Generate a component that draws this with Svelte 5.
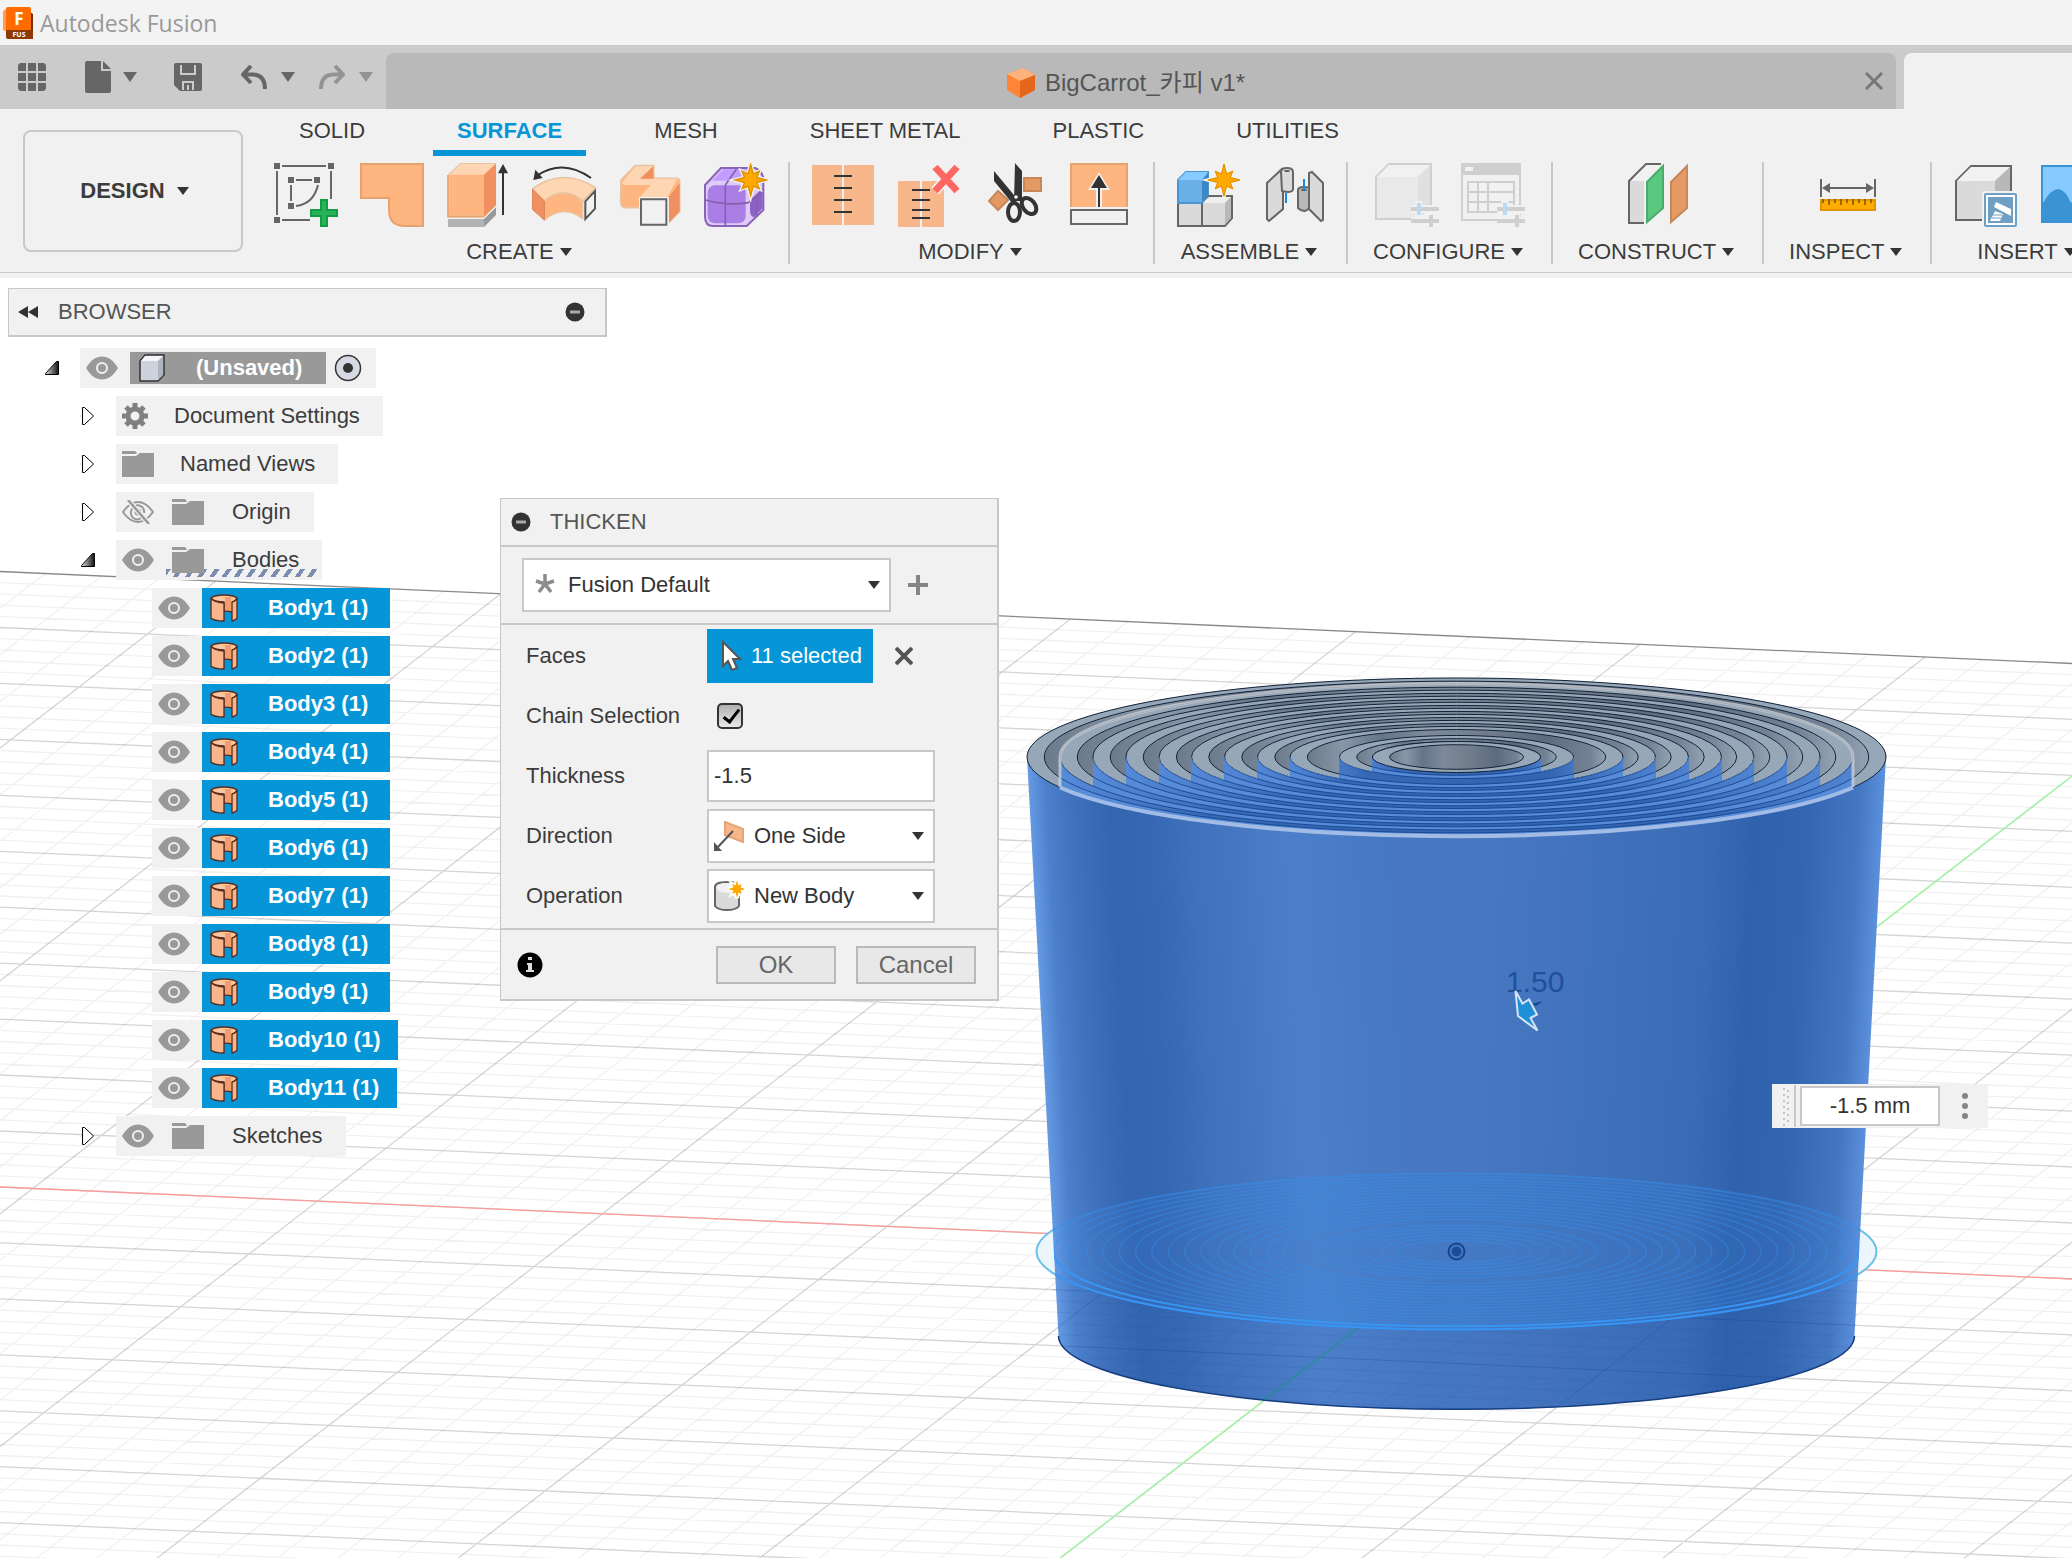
<script lang="ts">
  type TreeRow = {
    label: string
    level: number
    open?: boolean
    eye?: 'on' | 'off'
    icon: 'cube' | 'gear' | 'folder' | 'body'
    selected?: boolean
    hatched?: boolean
  }

  const tabs = ['SOLID', 'SURFACE', 'MESH', 'SHEET METAL', 'PLASTIC', 'UTILITIES']
  let activeTab = $state('SURFACE')

  const bodies: TreeRow[] = Array.from({ length: 11 }, (_, i) => ({
    label: `Body${i + 1} (1)`,
    level: 2,
    eye: 'on',
    icon: 'body',
    selected: true
  }))

  const rows: TreeRow[] = [
    { label: 'Document Settings', level: 1, open: false, icon: 'gear' },
    { label: 'Named Views', level: 1, open: false, icon: 'folder' },
    { label: 'Origin', level: 1, open: false, eye: 'off', icon: 'folder' },
    { label: 'Bodies', level: 1, open: true, eye: 'on', icon: 'folder', hatched: true },
    ...bodies,
    { label: 'Sketches', level: 1, open: false, eye: 'on', icon: 'folder' }
  ]

  let chain = $state(true)
  let thickness = $state('-1.5')
  let distance = $state('-1.5 mm')

  // ground grid: parallel projection, five minor cells per major cell
  const slope = 0.0444
  const farY = 571.5

  function gridPath(major: boolean) {
    let d = ''
    for (let j = 1; j < 90; j++) {
      if ((j % 5 === 0) !== major) continue
      const y = farY + j * 11.19
      d += `M0 ${y.toFixed(1)}L2072 ${(y + 2072 * slope).toFixed(1)}`
    }
    for (let i = -39; i < 20; i++) {
      if ((i % 5 === 0) !== major) continue
      const x = 2210 + i * 56.97
      const y = farY + x * slope
      d += `M${x.toFixed(1)} ${y.toFixed(1)}l-1370 1059`
    }
    return d
  }

  const minorGrid = gridPath(false)
  const majorGrid = gridPath(true)

  // concentric shells, outermost first
  const cx = 1456.5
  const topY = 757
  const tilt = 0.184
  const shells = [429.5, 396.5, 363.5, 330.5, 297.5, 265, 232, 199, 166.5, 117, 84]
  const wall = 17.3

  const sketchRadii = Array.from({ length: 22 }, (_, i) => 403 - i * 16.4).filter((_, i) => i !== 15)

  function front(r: number) {
    return `M${cx - r} ${topY}A${r} ${r * tilt} 0 0 0 ${cx + r} ${topY}V860H${cx - r}Z`
  }

  function star(x: number, y: number, r: number) {
    const pts = []
    for (let i = 0; i < 16; i++) {
      const len = i % 2 ? r * 0.42 : i % 4 ? r * 0.78 : r
      const a = (i * Math.PI) / 8
      pts.push(`${(x + len * Math.sin(a)).toFixed(1)},${(y - len * Math.cos(a)).toFixed(1)}`)
    }
    return pts.join(' ')
  }
</script>

{#snippet down()}
  <svg class="down" viewBox="0 0 12 8" aria-hidden="true"><path d="M0 0H12L6 8Z" fill="currentColor" /></svg>
{/snippet}

{#snippet minus()}
  <svg class="minus" viewBox="0 0 20 20" aria-hidden="true">
    <circle cx="10" cy="10" r="9.500" fill="#333" /><path d="M5 10H15" stroke="#aaa" stroke-width="3" />
  </svg>
{/snippet}

{#snippet eye(off: boolean)}
  <svg class="eye" viewBox="0 0 32 24" aria-hidden="true">
    {#if off}
      <g fill="none" stroke="#999" stroke-width="2">
        <path d="M1 12Q8 2 16 2T31 12Q24 22 16 22T1 12Z" />
        <path d="M11 8A6.500 6.500 0 1 0 21 16M14 5.500A6.500 6.500 0 0 1 22 13" />
        <circle cx="16" cy="12" r="2.500" />
      </g>
      <path d="M6 0L27 24" stroke="#f1f1f1" stroke-width="5" /><path d="M6 0L27 24" stroke="#999" stroke-width="2.500" />
    {:else}
      <path d="M0 12C5 4 10 0.500 16 0.500S27 4 32 12C27 20 22 23.500 16 23.500S5 20 0 12Z" fill="#999" />
      <circle cx="16" cy="12" r="5" fill="none" stroke="#f1f1f1" stroke-width="2" />
    {/if}
  </svg>
{/snippet}

{#snippet caret(open: boolean)}
  <svg class="caret" viewBox="0 0 16 20" aria-hidden="true">
    {#if open}
      <path d="M14.500 3.500V16.500H1.500V15.500L12.500 3.500Z" fill="url(#caretFill)" stroke="#000" />
    {:else}
      <path d="M2.500 1.500H4.500L13.500 10L4.500 18.500H2.500Z" fill="#fff" stroke="#000" />
    {/if}
  </svg>
{/snippet}

{#snippet sliders()}
  <path d="M36 46H64M36 58H64" stroke="#f1f1f1" stroke-width="8" />
  <path d="M44 38V54M56 50V64" stroke="#f1f1f1" stroke-width="7" />
  <path d="M36 46H64M36 58H64M56 52V64" stroke="#cfcfcf" stroke-width="4" />
  <path d="M44 40V52" stroke="#b9daf2" stroke-width="4" />
{/snippet}

<div class="app">
  <header class="titlebar">
    <svg class="logo" viewBox="0 0 30 32" aria-hidden="true">
      <path d="M0 4L5 1V25L0 23Z" fill="#ff9a56" />
      <path d="M27 5L30 7V32L27 31Z" fill="#7a3000" />
      <rect x="3" y="0" width="25" height="25" rx="2" fill="#ff6b00" />
      <path d="M3 23H30V32H5Q3 32 3 30Z" fill="#8f3a00" />
      <text x="16" y="18" class="logo-f">F</text>
      <text x="16" y="30" class="logo-fus">FUS</text>
    </svg>
    <span>Autodesk Fusion</span>
  </header>

  <div class="tabbar">
    <div class="quick">
      <button aria-label="Data panel">
        <svg width="28" height="28" viewBox="0 0 28 28">
          <path d="M2 0H8V8H0V2ZM10 0H18V8H10ZM20 0H26L28 2V8H20ZM0 10H8V18H0ZM10 10H18V18H10ZM20 10H28V18H20ZM0 20H8V28H2L0 26ZM10 20H18V28H10ZM20 20H28V26L26 28H20Z" fill="currentColor" />
        </svg>
      </button>
      <button class="file" aria-label="File">
        <svg width="26" height="32" viewBox="0 0 26 32"><path d="M2 0H16V10H26V30Q26 32 24 32H2Q0 32 0 30V2Q0 0 2 0ZM18 0L26 8H18Z" fill="currentColor" /></svg>
        <svg class="drop" viewBox="0 0 14 10"><path d="M0 0H14L7 10Z" fill="currentColor" /></svg>
      </button>
      <button class="save" aria-label="Save">
        <svg width="28" height="28" viewBox="0 0 28 28">
          <path d="M2 0H26Q28 0 28 2V26Q28 28 26 28H6L0 22V2Q0 0 2 0Z" fill="currentColor" />
          <path d="M7 2V11H21V2M9 27V19H19V27" fill="none" stroke="#cbcbcb" stroke-width="2" />
          <path d="M14 22V27" stroke="#cbcbcb" stroke-width="2" />
        </svg>
      </button>
      <button class="undo" aria-label="Undo">
        <svg width="26" height="24" viewBox="0 0 26 24"><path d="M10 1L2 9.500L10 18M2 9.500H12Q24 10 24 24" fill="none" stroke="currentColor" stroke-width="4" /></svg>
        <svg class="drop" viewBox="0 0 14 10"><path d="M0 0H14L7 10Z" fill="currentColor" /></svg>
      </button>
      <button class="redo" aria-label="Redo" disabled>
        <svg width="26" height="24" viewBox="0 0 26 24"><path d="M16 1L24 9.500L16 18M24 9.500H14Q2 10 2 24" fill="none" stroke="currentColor" stroke-width="4" /></svg>
        <svg class="drop" viewBox="0 0 14 10"><path d="M0 0H14L7 10Z" fill="currentColor" /></svg>
      </button>
    </div>
    <div class="doc">
      <div class="doc-name">
        <svg width="30" height="32" viewBox="0 0 30 32" aria-hidden="true">
          <path d="M1 7L17 1L29 8V23L14 31L1 23Z" fill="#ff8534" />
          <path d="M1 7L17 1L29 8L14 14Z" fill="#ffb27d" /><path d="M14 14L29 8V23L14 31Z" fill="#e5661a" />
        </svg>
        <span>BigCarrot_카피 v1*</span>
      </div>
      <button class="close" aria-label="Close">
        <svg width="18" height="18" viewBox="0 0 18 18"><path d="M1 1L17 17M17 1L1 17" stroke="#777" stroke-width="3" /></svg>
      </button>
    </div>
    <div class="next-tab"></div>
  </div>

  <section class="ribbon">
    <button class="workspace">DESIGN {@render down()}</button>
    <div class="ribbon-main">
      <nav class="tabs">
        {#each tabs as tab (tab)}
          <button class:active={tab === activeTab} onclick={() => (activeTab = tab)}>{tab}</button>
        {/each}
      </nav>
      <div class="groups">
        <div class="group">
          <div class="icons">
            <svg viewBox="42 189 192 192">
              <path d="M66 198H198M51 213V345M213 213V297M66 360H150M108 240H156M93 255V303M174 255Q160 312 108 318" fill="none" stroke="#666" stroke-width="6" />
              <path d="M42 189H60V207H42ZM204 189H222V207H204ZM42 351H60V369H42ZM84 231H102V249H84ZM162 231H180V249H162ZM84 309H102V327H84Z" fill="#666" />
              <path d="M183 300H201V330H231V348H201V378H183V348H153V330H183Z" fill="#27b35a" stroke="#149b45" stroke-width="6" />
            </svg>
            <svg viewBox="300 189 192 192"><path d="M303 192H489V378H435Q387 378 387 330V294H303Z" fill="#ffb580" stroke="#e8a26e" stroke-width="6" /></svg>
            <svg viewBox="558 189 192 192">
              <path d="M564 357H672V381H564Z" fill="#b3b3b3" /><path d="M672 357L708 322V345L672 381Z" fill="#999" />
              <path d="M567 224L602 191H706V314L671 349H567Z" fill="#ffb580" stroke="#e8c3a0" stroke-width="5" />
              <path d="M567 224L602 192H706L671 224Z" fill="#ffd6b3" /><path d="M672 225L708 191V316L672 350Z" fill="#f09060" />
              <path d="M564 225V350H672" fill="none" stroke="#e8a26e" stroke-width="5" />
              <path d="M729 345V205" stroke="#333" stroke-width="6" /><path d="M729 192L744 220H714Z" fill="#333" />
            </svg>
            <svg viewBox="816 189 192 192">
              <path d="M817 266Q912 200 1007 264L968 303Q912 255 853 303Z" fill="#ffd6b3" stroke="#e8c3a0" stroke-width="5" />
              <path d="M853 303Q912 255 968 303V356Q912 312 853 360Z" fill="#ffb580" stroke="#e8c3a0" stroke-width="4" />
              <path d="M817 268L853 303V360L817 328Z" fill="#f09060" stroke="#d98050" stroke-width="3" />
              <path d="M976 304L1005 273V326L976 357Z" fill="#f1f1f1" stroke="#555" stroke-width="6" />
              <path d="M993 234Q910 175 832 226" fill="none" stroke="#333" stroke-width="6" /><path d="M820 240L826 209L848 234Z" fill="#333" />
            </svg>
            <svg viewBox="1074 189 192 192">
              <path d="M1083 240L1125 197H1181V235H1249Q1259 235 1259 245V335L1226 368H1140V323H1100Q1082 323 1082 305Z" fill="#ffb580" stroke="#e8c3a0" stroke-width="5" />
              <path d="M1085 250L1126 199H1180L1140 236H1252L1222 292H1140L1172 255H1095Z" fill="#ffd6b3" />
              <path d="M1180 199V236H1140ZM1226 290L1259 250V333L1226 368Z" fill="#f09060" />
              <path d="M1137 291H1227V379H1137Z" fill="#f1f1f1" /><path d="M1143 298H1219V374H1143Z" fill="#f1f1f1" stroke="#666" stroke-width="6" />
            </svg>
            <svg viewBox="1332 189 192 192">
              <path d="M1335 255L1383 204H1485Q1510 215 1510 240V330L1460 378H1360Q1335 378 1335 350Z" fill="#decbf8" stroke="#8a62b8" stroke-width="6" />
              <path d="M1356 242L1390 208H1470L1440 242Z" fill="#c39cff" /><rect x="1343" y="256" width="114" height="114" rx="22" fill="#ab7ee6" />
              <path d="M1470 300L1508 264V325L1482 352Q1470 350 1470 330Z" fill="#8a62c8" />
              <path d="M1396 378V255L1430 206M1337 300Q1400 318 1465 308L1508 275M1490 290V350" fill="none" stroke="#8460ae" stroke-width="5" />
              <polygon points={star(1472, 240, 50)} fill="#ffa800" stroke="#f1f1f1" stroke-width="10" paint-order="stroke" /><polygon points={star(1472, 240, 47)} fill="#ffa800" stroke="#e09000" stroke-width="4" />
            </svg>
          </div>
          <button class="menu">CREATE {@render down()}</button>
        </div>

        <div class="group">
          <div class="icons">
            <svg viewBox="0 0 64 64">
              <path d="M1 2H31V62H1ZM33 2H63V62H33Z" fill="#f7b78b" /><path d="M23 13H41M23 25H41M23 37H41M23 49H41" stroke="#333" stroke-width="2" />
            </svg>
            <svg viewBox="0 0 64 64">
              <path d="M1 18H23V64H1ZM25 18H47V64H25Z" fill="#f7b78b" /><path d="M15 27H33M15 37H33M15 47H33M15 55H33" stroke="#333" stroke-width="2" />
              <path d="M38 4L60 28M60 4L38 28" stroke="#f1f1f1" stroke-width="10" /><path d="M38 4L60 28M60 4L38 28" stroke="#ff6663" stroke-width="7" />
            </svg>
            <svg viewBox="0 0 64 64">
              <path d="M41 15H58V28H41ZM6 38L15 28L25 37L15 47Z" fill="#e59a66" stroke="#c98657" stroke-width="2" />
              <path d="M32 0L39 8V38H31ZM11 8L31 32L33 40H29L11 18Z" fill="#333" />
              <ellipse cx="31" cy="49" rx="6" ry="9" fill="none" stroke="#333" stroke-width="4" />
              <ellipse cx="46" cy="43" rx="6" ry="9" transform="rotate(-38 46 43)" fill="none" stroke="#333" stroke-width="4" />
              <circle cx="33" cy="34" r="1.800" fill="#fff" />
            </svg>
            <svg viewBox="0 0 64 64">
              <path d="M2 44V1H58V44" fill="#ffb580" stroke="#e8a26e" stroke-width="2" />
              <path d="M30 9L41 27H33V44H27V27H19Z" fill="#f1f1f1" /><path d="M30 12L38 25H31V44H29V25H22Z" fill="#333" />
              <path d="M2 47H58V61H2Z" fill="none" stroke="#666" stroke-width="2" />
            </svg>
          </div>
          <button class="menu">MODIFY {@render down()}</button>
        </div>

        <div class="group">
          <div class="icons">
            <svg viewBox="0 0 64 64">
              <path d="M2 40H26V63H2ZM26 40L33 33H56V55L49 63H26Z" fill="#dadada" stroke="#666" stroke-width="2" /><path d="M26 40L33 34H55L49 40Z" fill="#eee" /><path d="M49 40L55 34V55L49 62Z" fill="#b8b8b8" />
              <path d="M2 17L10 9H32V32L26 40H2Z" fill="#69b0e6" stroke="#4a94cf" stroke-width="2" /><path d="M2 17L10 9H32L26 17Z" fill="#86caff" /><path d="M26 17L32 10V32L26 39Z" fill="#3d88c4" />
              <polygon points={star(48, 17, 17)} fill="#ffa800" stroke="#f1f1f1" stroke-width="3" paint-order="stroke" /><polygon points={star(48, 17, 16)} fill="#ffa800" stroke="#e09000" />
            </svg>
            <svg viewBox="0 0 64 64">
              <g fill="#dadada" stroke="#666" stroke-width="2">
                <path d="M5 20L20 6L21 8V46L7 58L5 56Z" /><path d="M19 9Q19 5 25 5T31 9V26Q31 29 25 29L20 28Z" /><path d="M47 10L50 9L61 20V57L59 58L47 46Z" />
                <path d="M36 27Q36 24 42 24T47 27V45Q45 48 42 48T36 45Z" fill="#b8b8b8" />
              </g>
              <ellipse cx="25" cy="8" rx="3" ry="1" fill="#555" /><ellipse cx="42" cy="27" rx="3" ry="1" fill="#555" />
              <path d="M24 30V40M42 16V27" stroke="#148ae0" stroke-width="2" />
            </svg>
          </div>
          <button class="menu">ASSEMBLE {@render down()}</button>
        </div>

        <div class="group">
          <div class="icons">
            <svg viewBox="0 0 64 64">
              <path d="M1 14L14 1H56V41L43 56H1Z" fill="#e9e9e9" stroke="#cfcfcf" stroke-width="2" /><path d="M2 14L14 2H55L43 14Z" fill="#f1f1f1" /><path d="M43 14L55 2V41L43 55Z" fill="#e0e0e0" />
              {@render sliders()}
            </svg>
            <svg viewBox="0 0 64 64">
              <path d="M1 1H59V57H1Z" fill="none" stroke="#cfcfcf" stroke-width="2" /><path d="M0 0H60V12H0Z" fill="#cfcfcf" /><path d="M4 4H12V8H4Z" fill="#f1f1f1" />
              <path d="M7 19H53V49H7ZM7 29H53M7 39H53M17 19V49M27 19V49" fill="none" stroke="#cfcfcf" stroke-width="2" />
              {@render sliders()}
            </svg>
          </div>
          <button class="menu">CONFIGURE {@render down()}</button>
        </div>

        <div class="group">
          <div class="icons">
            <svg viewBox="0 0 64 64">
              <path d="M3 18H18V60H3Z" fill="#dadada" /><path d="M18 60H3V18L20 1H35" fill="none" stroke="#666" stroke-width="2" />
              <path d="M21 19L37 3V45L21 59Z" fill="#5ac97f" stroke="#48ac6a" stroke-width="2" /><path d="M45 19L61 3V45L45 59Z" fill="#e59a66" stroke="#c98657" stroke-width="2" />
            </svg>
          </div>
          <button class="menu">CONSTRUCT {@render down()}</button>
        </div>

        <div class="group">
          <div class="icons">
            <svg viewBox="0 0 64 64">
              <path d="M5 16V34M59 16V34M8 25H56" stroke="#666" stroke-width="2" /><path d="M6 25L14 20V30ZM58 25L50 20V30Z" fill="#666" />
              <path d="M5 37H59V47H5Z" fill="#ffab00" stroke="#e09600" stroke-width="2" /><path d="M7 36V40M13 36V42M19 36V40M25 36V42M31 36V40M37 36V42M43 36V40M49 36V42M55 36V40" stroke="#7a5500" stroke-width="1.500" />
            </svg>
          </div>
          <button class="menu">INSPECT {@render down()}</button>
        </div>

        <div class="group">
          <div class="icons">
            <svg viewBox="0 0 64 64">
              <path d="M3 18L18 3H58V42L42 57H3Z" fill="#dadada" stroke="#666" stroke-width="2" /><path d="M4 18L18 4H57L42 18Z" fill="#f1f1f1" /><path d="M42 18L57 4V42L42 56Z" fill="#b8b8b8" />
              <rect x="29" y="28" width="35" height="36" rx="3" fill="#f1f1f1" /><rect x="31" y="30" width="33" height="34" rx="2" fill="#6f9fc2" /><path d="M34 33H61V61H34Z" fill="none" stroke="#fff" stroke-width="2" />
              <path d="M43 39L58 46V53L41 44ZM42 48L50 51L47 58H37Z" fill="#fff" /><path d="M40 52H49M39 55H48" stroke="#6f9fc2" />
            </svg>
            <svg viewBox="0 0 64 64">
              <path d="M3 3H63V59H3Z" fill="#86caff" stroke="#3c93d4" stroke-width="2" /><path d="M4 40Q12 26 19 26T32 40L44 30L62 44V58H4Z" fill="#3c93d4" />
            </svg>
          </div>
          <button class="menu">INSERT {@render down()}</button>
        </div>
      </div>
    </div>
  </section>

  <main class="viewport">
    <svg class="scene" viewBox="0 278 2072 1280" preserveAspectRatio="xMinYMin slice" role="img" aria-label="Model">
      <defs>
        <linearGradient id="caretFill"><stop offset="0" stop-color="#ddd" /><stop offset="1" stop-color="#111" /></linearGradient>
        <linearGradient id="left" gradientUnits="userSpaceOnUse" x1="1027" x2="1457" y1="0" y2="0">
          <stop offset="0" stop-color="#659ae3" /><stop offset=".04" stop-color="#4c80cc" /><stop offset=".1" stop-color="#4071bb" />
          <stop offset=".19" stop-color="#3365b0" /><stop offset=".27" stop-color="#3567b2" /><stop offset=".38" stop-color="#4071bb" />
          <stop offset=".6" stop-color="#4c7fca" /><stop offset=".88" stop-color="#4677c0" />
        </linearGradient>
        <linearGradient id="right" gradientUnits="userSpaceOnUse" x1="1457" x2="1887" y1="0" y2="0">
          <stop offset=".1" stop-color="#4677c0" /><stop offset=".45" stop-color="#3e6fb9" /><stop offset=".6" stop-color="#3a6bb5" />
          <stop offset=".7" stop-color="#2f62ad" /><stop offset=".82" stop-color="#3365b0" /><stop offset=".94" stop-color="#4477c2" /><stop offset="1" stop-color="#5c91dd" />
        </linearGradient>
        <linearGradient id="gap">
          <stop offset="0" stop-color="#6c7b8c" /><stop offset=".12" stop-color="#8797a8" /><stop offset=".25" stop-color="#657589" />
          <stop offset=".4" stop-color="#7e8a99" /><stop offset=".6" stop-color="#727d8c" /><stop offset=".8" stop-color="#5c6b7d" /><stop offset=".95" stop-color="#738294" /><stop offset="1" stop-color="#93a3b4" />
        </linearGradient>
        <linearGradient id="gapBlue"><stop offset="0" stop-color="#5a8fdf" /><stop offset=".2" stop-color="#3567b3" /><stop offset=".8" stop-color="#3264b0" /><stop offset="1" stop-color="#5488d6" /></linearGradient>
        <clipPath id="bodyClip"><path d="M1027 757L1058.500 1336A398 73.300 0 0 0 1854.500 1336L1886 757A429.500 79 0 0 0 1027 757Z" /></clipPath>
        <clipPath id="baseClip"><path d="M1050 1270A420 78 0 0 0 1863 1270L1854.500 1336A398 73.300 0 0 1 1058.500 1336Z" /></clipPath>
        <clipPath id="cutClip">
          {#each shells.slice(1) as r (r)}<path d={front(r)} />{/each}
        </clipPath>
      </defs>

      <g fill="none">
        <path d={minorGrid} stroke="#000" stroke-opacity=".06" stroke-width="1.300" />
        <path d={majorGrid} stroke="#000" stroke-opacity=".17" stroke-width="1.300" />
        <path d="M0 571.500L2072 663.500" stroke="#888" stroke-width="1.300" />
        <path d="M0 1187L2072 1279" stroke="#ff9a9a" stroke-width="1.300" />
        <path d="M2072 776L1060 1558" stroke="#9df79d" stroke-width="1.300" />
      </g>

      <ellipse {cx} cy="1251.500" rx="420" ry="78" fill="#eaf6fb" stroke="#69c0e8" stroke-width="2" />

      <g clip-path="url(#bodyClip)">
        <rect x="1020" y="670" width="500" height="760" fill="url(#left)" transform="matrix(1 0 .0548 1 -41.500 0)" />
        <rect x="1457" y="670" width="470" height="760" fill="url(#right)" transform="matrix(1 0 -.0548 1 41.500 0)" />
      </g>
      <path d="M1058.500 1336A398 73.300 0 0 0 1854.500 1336" fill="none" stroke="#173f80" stroke-width="1.500" />

      <g clip-path="url(#baseClip)" fill="none" opacity=".3">
        <path d={minorGrid} stroke="#123a78" stroke-opacity=".3" />
        <path d={majorGrid} stroke="#123a78" stroke-opacity=".8" />
        <path d="M2072 776L1060 1558" stroke="#00a050" stroke-width="2" />
      </g>

      <g clip-path="url(#bodyClip)" fill="none" stroke="#3590ee">
        <ellipse {cx} cy="1251.500" rx="420" ry="78" fill="#3d92ee" fill-opacity=".1" stroke-opacity=".5" stroke-width="2" />
        {#each sketchRadii as r (r)}
          <ellipse {cx} cy="1251.500" rx={r} ry={r * 0.1855} stroke-opacity=".42" stroke-width="1.500" />
        {/each}
        <path d="M1036.500 1251.500A420 78 0 0 0 1876.500 1251.500M1053.500 1251.500A403 74.800 0 0 0 1859.500 1251.500" stroke="#3795f4" stroke-width="2" />
      </g>
      <circle {cx} cy="1251.500" r="8" fill="none" stroke="#174488" stroke-width="2" /><circle {cx} cy="1251.500" r="5" fill="#1b4d99" />

      {#each shells as r (r)}
        <ellipse {cx} cy={topY} rx={r} ry={r * tilt} fill="#96a7b8" stroke="#152338" />
        <ellipse {cx} cy={topY} rx={r - wall} ry={(r - wall) * tilt} fill="url(#gap)" stroke="#152338" />
      {/each}
      <g clip-path="url(#cutClip)">
        {#each shells as r (r)}
          <ellipse {cx} cy={topY} rx={r} ry={r * tilt} fill="#568bd8" stroke="#0d3a85" stroke-opacity=".75" />
          {#if r > 84}
            <ellipse {cx} cy={topY} rx={r - wall} ry={(r - wall) * tilt} fill="url(#gapBlue)" stroke="#0d3a85" stroke-opacity=".75" />
          {/if}
        {/each}
      </g>
      <ellipse {cx} cy={topY} rx="84" ry="15.500" fill="#96a7b8" stroke="#152338" />
      <ellipse {cx} cy={topY} rx="67" ry="12.300" fill="url(#gap)" stroke="#152338" />

      <path d="M1060 787V757A396.500 73.500 0 0 1 1853 757V787" fill="none" stroke="#c9ced4" stroke-width="3" stroke-opacity=".8" />
      <path d="M1060 787.500A429.500 79 0 0 0 1853 787.500" fill="none" stroke="#a3bce6" stroke-width="4" />

      <text x="1506" y="992" class="dim">1.50</text>
      <path d="M1532 1004L1543 1001L1536 1006Z" fill="#174488" />
      <path d="M1515.500 991L1522.500 1003.500L1529 999.500L1537 1014.500L1530.500 1018L1537.500 1030.500L1518 1016Z" fill="#1f8fd6" stroke="#d5e3f5" stroke-width="2" />
    </svg>

    <aside class="browser">
      <div class="browser-head">
        <svg width="20" height="12" viewBox="0 0 20 12" aria-hidden="true"><path d="M10 0V12L0 6ZM20 0V12L10 6Z" fill="#333" /></svg>
        <span>BROWSER</span>
        {@render minus()}
      </div>
      <div class="tree">
        <div class="row root">
          {@render caret(true)}
          <div class="chip">
            {@render eye(false)}
            <div class="doc-node">
              <svg width="28" height="28" viewBox="0 0 28 28" aria-hidden="true">
                <path d="M2 7L7 1H26V21L20 27H2Z" fill="#cdd2dd" stroke="#333" stroke-width="1.500" /><path d="M3 7L7 2H25L20 7Z" fill="#f5f6fa" /><path d="M20 7L25 2V21L20 26Z" fill="#aeb5c2" />
              </svg>
              <span>(Unsaved)</span>
            </div>
            <svg width="28" height="28" viewBox="0 0 28 28" aria-hidden="true"><circle cx="14" cy="14" r="12.500" fill="#d5dae4" stroke="#333" stroke-width="1.500" /><circle cx="14" cy="14" r="5" fill="#333" /></svg>
          </div>
        </div>
        {#each rows as row (row.label)}
          <div class="row" class:nested={row.level === 2}>
            {#if row.level === 1}{@render caret(row.open ?? false)}{/if}
            <div class="chip" class:plain={!row.eye} class:selected={row.selected}>
              {#if row.eye}{@render eye(row.eye === 'off')}{/if}
              <div class="node" class:hatched={row.hatched}>
                {#if row.icon === 'gear'}
                  <svg width="26" height="26" viewBox="0 0 26 26" aria-hidden="true">
                    <path d="M13 0V26M0 13H26M4 4L22 22M22 4L4 22" stroke="#808080" stroke-width="5" /><circle cx="13" cy="13" r="7" fill="#f1f1f1" stroke="#808080" stroke-width="5" />
                  </svg>
                {:else if row.icon === 'folder'}
                  <svg width="32" height="26" viewBox="0 0 32 26" aria-hidden="true"><path d="M0 0H13L15 2L14 3H0ZM0 5H14L18 2H32V26H0Z" fill="#999" /></svg>
                {:else}
                  <svg width="28" height="28" viewBox="0 0 28 28" aria-hidden="true">
                    <g stroke="#5a2a18" stroke-width="1.300" stroke-linejoin="round">
                      <path d="M14 8V17Q18 17 23 18L27 4Q23 1 14 1T1 4Q4 8 14 8Z" fill="#fbc6a0" />
                      <path d="M1 4Q3 8 14 9V27Q4 27 1 24Z" fill="#f8b48a" />
                      <path d="M27 4V24Q26 26 22 27V8Q26 7 27 4Z" fill="#f8b48a" />
                    </g>
                    <path d="M15 3H21V16H15Z" fill="#f29e6c" />
                  </svg>
                {/if}
                <span>{row.label}</span>
              </div>
            </div>
          </div>
        {/each}
      </div>
    </aside>

    <form class="dialog" onsubmit={(e) => e.preventDefault()}>
      <div class="dialog-head">{@render minus()}<span>THICKEN</span></div>
      <div class="preset">
        <div class="select wide">
          <svg width="20" height="20" viewBox="0 0 20 20" aria-hidden="true"><path d="M10 10V0M10 10L1 7M10 10L19 7M10 10L4 18M10 10L16 18" stroke="#8c8c8c" stroke-width="3.500" /></svg>
          <select aria-label="Preset"><option>Fusion Default</option></select>
          {@render down()}
        </div>
        <button type="button" class="bare" aria-label="Add preset"><svg width="20" height="20" viewBox="0 0 20 20"><path d="M10 0V20M0 10H20" stroke="#858585" stroke-width="4" /></svg></button>
      </div>
      <div class="fields">
        <div class="field">
          <span class="name">Faces</span>
          <button type="button" class="picker">
            <svg width="20" height="32" viewBox="0 0 20 32" aria-hidden="true"><path d="M1 2V26L6 21L10 30L15 28L11 19H18Z" fill="#fff" stroke="#555" stroke-width="2" /></svg>
            11 selected
          </button>
          <button type="button" class="bare" aria-label="Clear faces"><svg width="18" height="18" viewBox="0 0 18 18"><path d="M1 1L17 17M17 1L1 17" stroke="#555" stroke-width="4" /></svg></button>
        </div>
        <div class="field">
          <label class="name" for="chain">Chain Selection</label>
          <input id="chain" type="checkbox" bind:checked={chain} />
        </div>
        <div class="field">
          <label class="name" for="thickness">Thickness</label>
          <input id="thickness" type="text" bind:value={thickness} />
        </div>
        <div class="field">
          <label class="name" for="direction">Direction</label>
          <div class="select">
            <svg width="30" height="30" viewBox="0 0 30 30" aria-hidden="true"><path d="M11 1L29 8V21L11 14Z" fill="#f7b78b" stroke="#e5a577" stroke-width="2" /><path d="M19 10L3 27" stroke="#555" stroke-width="2" /><path d="M0 21V30H8Z" fill="#555" /></svg>
            <select id="direction"><option>One Side</option></select>
            {@render down()}
          </div>
        </div>
        <div class="field">
          <label class="name" for="operation">Operation</label>
          <div class="select">
            <svg width="30" height="30" viewBox="0 0 30 30" aria-hidden="true">
              <path d="M1 6Q1 1 13 1T25 6V25Q22 29 13 29T1 25Z" fill="#dadada" stroke="#666" stroke-width="2" /><ellipse cx="13" cy="7" rx="11" ry="5" fill="#f1f1f1" />
              <polygon points={star(23, 8, 9)} fill="#ffa800" stroke="#fff" stroke-width="4" paint-order="stroke" />
            </svg>
            <select id="operation"><option>New Body</option></select>
            {@render down()}
          </div>
        </div>
      </div>
      <div class="actions">
        <svg width="26" height="26" viewBox="0 0 26 26" aria-hidden="true"><circle cx="13" cy="13" r="12.500" /><path d="M11 5H15V8H11ZM10 11H15V18H17V20H9V18H11V13H10Z" fill="#ddd" /></svg>
        <button>OK</button>
        <button type="button">Cancel</button>
      </div>
    </form>

    <div class="distance">
      <svg width="8" height="40" viewBox="0 0 8 40" aria-hidden="true"><path d="M2 2V40M6 4V40" stroke="#c4c4c4" stroke-width="2" stroke-dasharray="2 4" /></svg>
      <i></i>
      <input type="text" aria-label="Distance" bind:value={distance} />
      <button aria-label="More"><svg width="6" height="28" viewBox="0 0 6 28"><circle cx="3" cy="4" r="3" /><circle cx="3" cy="14" r="3" /><circle cx="3" cy="24" r="3" /></svg></button>
    </div>
  </main>
</div>

<style>
  :global(body) {
    margin: 0;
    background: #fff;
  }

  .app {
    display: flex;
    flex-direction: column;
    height: 100vh;
    overflow: hidden;
    color: #3c3c3c;
    font-family: 'Liberation Sans', Arial, 'Noto Sans CJK KR', sans-serif;
    font-size: 22px;
    line-height: 26px;
  }

  svg {
    display: block;
    flex: none;
  }

  button {
    display: flex;
    align-items: center;
    padding: 0;
    border: 0;
    background: none;
    color: inherit;
    font: inherit;
    white-space: nowrap;
  }

  .down {
    width: 12px;
    height: 8px;
    color: #333;
  }

  .titlebar {
    display: flex;
    align-items: center;
    gap: 7px;
    height: 45px;
    padding: 0 3px;
    background: #f3f3f3;
    color: #999;
    font-family: 'Open Sans', 'Noto Sans', sans-serif;
    font-size: 23px;
  }

  .logo {
    width: 30px;
    height: 32px;
  }

  .logo-f,
  .logo-fus {
    fill: #fff;
    font-weight: 700;
    text-anchor: middle;
  }

  .logo-f {
    font-size: 17px;
  }

  .logo-fus {
    font-size: 7px;
  }

  .tabbar {
    display: flex;
    align-items: flex-end;
    height: 64px;
    background: #cbcbcb;
  }

  .quick {
    display: flex;
    align-items: center;
    box-sizing: border-box;
    width: 386px;
    height: 64px;
    padding-left: 18px;
    color: #666;
  }

  .quick button {
    gap: 12px;
  }

  .quick .file {
    margin-left: 39px;
  }

  .quick .save {
    margin-left: 37px;
  }

  .quick .undo {
    gap: 14px;
    margin-left: 39px;
  }

  .quick .redo {
    gap: 14px;
    margin-left: 24px;
    color: #939393;
  }

  .drop {
    width: 14px;
    height: 10px;
  }

  .doc {
    display: flex;
    flex: 1;
    align-items: center;
    height: 56px;
    padding-right: 13px;
    border-radius: 8px 8px 0 0;
    background: #b9b9b9;
  }

  .doc-name {
    display: flex;
    flex: 1;
    align-items: center;
    justify-content: center;
    gap: 9px;
    padding-top: 3px;
    color: #555;
    font-size: 24px;
  }

  .next-tab {
    width: 168px;
    height: 56px;
    margin-left: 8px;
    border-top-left-radius: 8px;
    background: #f1f1f1;
  }

  .ribbon {
    display: flex;
    flex: none;
    height: 163px;
    border-bottom: 1px solid #c8c8c8;
    background: #f1f1f1;
    box-shadow: 0 5px #f1f1f1;
  }

  .workspace {
    box-sizing: border-box;
    flex: none;
    justify-content: center;
    gap: 12px;
    width: 220px;
    height: 122px;
    margin: 21px 10px 0 23px;
    padding-left: 3px;
    border: 2px solid #c8c8c8;
    border-radius: 8px;
    font-weight: 700;
  }

  .ribbon-main {
    flex: 1;
    min-width: 0;
    overflow: hidden;
  }

  .tabs {
    display: flex;
    gap: 44px;
    padding-left: 22px;
  }

  .tabs button {
    height: 47px;
    padding: 3px 24px 0;
    border-bottom: 6px solid transparent;
  }

  .tabs .active {
    border-color: #0696d7;
    color: #0696d7;
    font-weight: 700;
  }

  .groups {
    display: flex;
    margin-top: 6px;
  }

  .group {
    display: flex;
    flex: none;
    flex-direction: column;
    align-items: center;
    height: 102px;
    padding: 0 20px 0 21px;
    border-right: 2px solid #c8c8c8;
  }

  .group:last-child {
    border-right: 0;
  }

  .icons {
    display: flex;
    gap: 22px;
    padding-top: 1px;
  }

  .icons svg {
    width: 64px;
    height: 64px;
  }

  .menu {
    gap: 6px;
    height: 26px;
    margin-top: 12px;
    padding: 0 8px 0 4px;
  }

  .viewport {
    position: relative;
    flex: 1;
    min-height: 0;
    margin-top: 5px;
    overflow: hidden;
  }

  .scene {
    width: 100%;
    height: 100%;
  }

  .dim {
    fill: #20509a;
    font-size: 30px;
  }

  .minus {
    width: 20px;
    height: 20px;
  }

  .browser {
    position: absolute;
    top: 10px;
    left: 8px;
    width: 599px;
  }

  .browser-head {
    display: flex;
    align-items: center;
    box-sizing: border-box;
    height: 49px;
    padding: 0 20px 0 9px;
    border: solid #c8c8c8;
    border-width: 1px 2px 2px 1px;
    background: #f1f1f1;
    color: #555;
  }

  .browser-head span {
    flex: 1;
    padding-left: 20px;
  }

  .tree {
    display: flex;
    flex-direction: column;
    align-items: flex-start;
    gap: 8px;
    padding-top: 11px;
  }

  .row {
    display: flex;
    align-items: center;
    height: 40px;
    padding-left: 72px;
  }

  .row.root {
    padding-left: 36px;
  }

  .row.nested {
    padding-left: 144px;
  }

  .caret {
    width: 16px;
    height: 20px;
    margin-right: 20px;
  }

  .eye {
    width: 32px;
    height: 24px;
    margin: 0 12px 0 6px;
  }

  .chip {
    display: flex;
    align-items: center;
    height: 40px;
    background: #f1f1f1;
  }

  .root .chip {
    padding-right: 14px;
  }

  .doc-node {
    display: flex;
    align-items: center;
    gap: 30px;
    height: 32px;
    margin-right: 8px;
    padding: 0 24px 0 8px;
    background: #999;
    color: #fff;
    font-weight: 700;
  }

  .node {
    display: flex;
    align-items: center;
    gap: 28px;
    height: 40px;
    padding: 0 23px 0 6px;
  }

  .plain .node {
    gap: 26px;
  }

  .selected .node {
    box-sizing: border-box;
    gap: 30px;
    min-width: 188px;
    padding: 0 18px 0 8px;
    background: #0696d7;
    color: #fff;
    font-weight: 700;
  }

  .hatched {
    background: repeating-linear-gradient(125deg, #7a8db0 0 4px, transparent 4px 10px) 0 29px / 152px 8px no-repeat;
  }

  .dialog {
    position: absolute;
    top: 220px;
    left: 500px;
    box-sizing: border-box;
    width: 499px;
    border: solid #c8c8c8;
    border-width: 1px 2px 2px 1px;
    background: #f1f1f1;
  }

  .dialog-head {
    display: flex;
    align-items: center;
    gap: 19px;
    height: 46px;
    padding: 0 10px;
    border-bottom: 2px solid #c8c8c8;
    color: #555;
  }

  .preset {
    display: flex;
    align-items: center;
    gap: 17px;
    height: 76px;
    padding-left: 21px;
    border-bottom: 2px solid #c8c8c8;
  }

  .select {
    position: relative;
    width: 228px;
    height: 54px;
  }

  .select.wide {
    width: 369px;
  }

  .select svg {
    position: absolute;
    top: 12px;
    left: 7px;
    pointer-events: none;
  }

  .select.wide svg {
    top: 16px;
    left: 13px;
  }

  .select .down,
  .select.wide .down {
    top: 23px;
    right: 11px;
    left: auto;
  }

  select,
  input {
    box-sizing: border-box;
    margin: 0;
    border: 2px solid #c8c8c8;
    border-radius: 0;
    background: #fff;
    color: #333;
    font: inherit;
  }

  select {
    width: 100%;
    height: 100%;
    padding: 0 30px 0 45px;
    appearance: none;
  }

  .wide select {
    padding-left: 44px;
  }

  .fields {
    padding: 1px 0 2px 25px;
    border-bottom: 2px solid #c8c8c8;
  }

  .field {
    display: flex;
    align-items: center;
    height: 60px;
  }

  .name {
    width: 181px;
  }

  .picker {
    gap: 9px;
    width: 166px;
    height: 54px;
    margin-right: 22px;
    padding-left: 15px;
    background: #0696d7;
    color: #fff;
  }

  #chain {
    width: 26px;
    height: 26px;
    margin-left: 10px;
    border: 2px solid #333;
    border-radius: 5px;
    background: linear-gradient(#b0b0b0, #e8e8e8);
    appearance: none;
  }

  #chain:checked::after {
    display: block;
    width: 6px;
    height: 14px;
    margin: 1px 0 0 8px;
    border: solid #000;
    border-width: 0 3px 3px 0;
    content: '';
    transform: rotate(38deg);
  }

  #thickness {
    width: 228px;
    height: 52px;
    padding: 0 5px;
  }

  .actions {
    display: flex;
    align-items: center;
    gap: 20px;
    height: 69px;
    padding: 0 21px 0 16px;
  }

  .actions svg {
    margin-right: auto;
  }

  .actions button {
    justify-content: center;
    width: 120px;
    height: 38px;
    border: 2px solid #b9b9b9;
    background: #e8e8e8;
    color: #666;
    font-size: 24px;
  }

  .distance {
    position: absolute;
    top: 806px;
    left: 1772px;
    display: flex;
    align-items: center;
    box-sizing: border-box;
    width: 216px;
    height: 44px;
    padding-left: 10px;
    background: #f1f1f1;
  }

  .distance i {
    width: 2px;
    height: 42px;
    margin: 0 4px;
    background: #c8c8c8;
  }

  .distance input {
    width: 140px;
    height: 40px;
    text-align: center;
  }

  .distance button {
    margin-left: 22px;
  }

  .distance circle {
    fill: #858585;
  }
</style>
